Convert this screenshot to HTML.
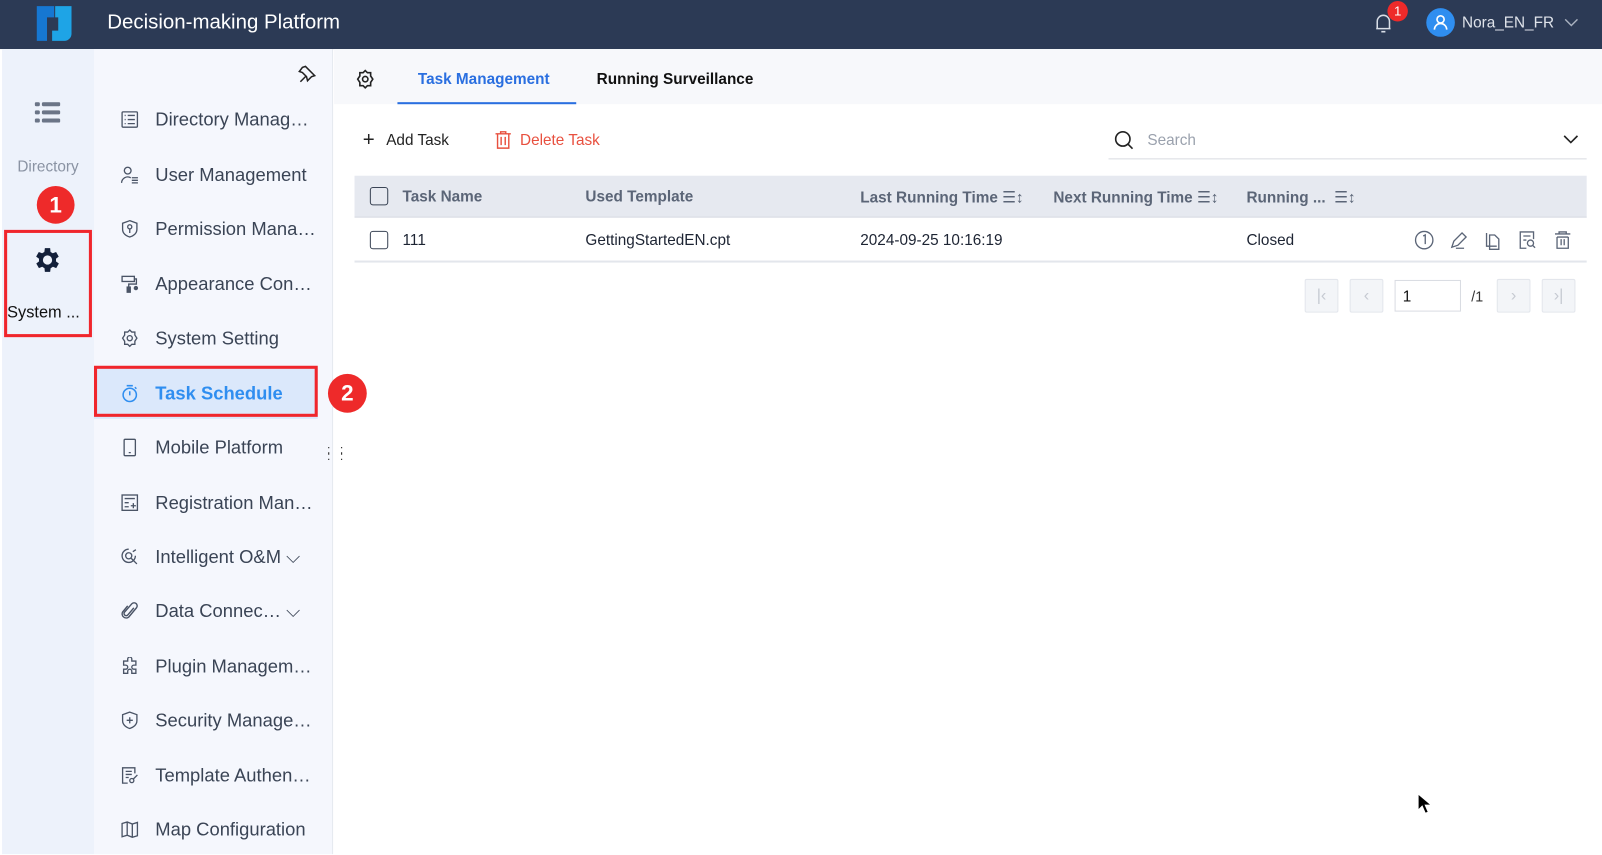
<!DOCTYPE html>
<html><head><meta charset="utf-8"><style>
*{box-sizing:border-box;margin:0;padding:0}
body{width:1602px;height:854px;overflow:hidden;background:#fff;font-family:"Liberation Sans",sans-serif}
#w{width:1568px;height:836px;transform:scale(1.02168);transform-origin:0 0;position:relative}
.a{position:absolute}
.hdr{left:0;top:0;width:1568px;height:48px;background:#2c3a55}
.rail{left:2px;top:48px;width:90px;height:788px;background:#edf2fb}
.sub{left:92px;top:48px;width:234px;height:788px;background:#f5f7fd;border-right:1px solid #e6e9f0}
.it{position:absolute;left:0;width:234px;height:50px;font-size:18px;color:#3a4455;line-height:50px;padding-left:60px;white-space:nowrap}
.it svg{position:absolute;left:26px;top:16px}
.tabs{left:327px;top:48px;width:1241px;height:54px;background:#f7f8fb}
.th{font-size:15px;font-weight:bold;color:#5b6577;top:184px}
.cb{width:18px;height:18px;border:1.5px solid #3a4455;border-radius:3px}
.pg{width:33px;height:33px;border:1px solid #e3e6ec;background:#f3f5f8;top:273px;border-radius:2px;color:#c6cad2;text-align:center;line-height:31px;font-size:16px}
.badge{border-radius:50%;background:#ee2a2a;color:#fff;font-weight:bold;text-align:center}
</style></head><body><div id="w">
<div class="a hdr"></div>
<svg class="a" style="left:34px;top:4px" width="38" height="38" viewBox="0 0 38 38"><path d="M2 2h17v11h-7v23H2z" fill="#1677d2"/><path d="M20 2h16v27a7 7 0 0 1-7 7H17V26h6V13h-3z" fill="#1ea4e6"/></svg>
<div class="a" style="left:105px;top:11px;font-size:20px;color:#fff">Decision-making Platform</div>
<svg class="a" style="left:1344px;top:12px" width="20" height="22" viewBox="0 0 20 22" fill="none" stroke="#d8dde6" stroke-width="1.5"><path d="M4 16V9a6 6 0 0 1 12 0v7H3h14"/><path d="M8 19h4"/></svg>
<div class="a badge" style="left:1358px;top:1px;width:20px;height:20px;font-size:13px;line-height:20px;font-weight:normal">1</div>
<div class="a" style="left:1396px;top:8px;width:28px;height:28px;border-radius:50%;background:#2f8ef0"></div>
<svg class="a" style="left:1400px;top:12px" width="20" height="20" viewBox="0 0 20 20" fill="none" stroke="#fff" stroke-width="1.6"><circle cx="10" cy="7" r="3.5"/><path d="M4 17a6 6 0 0 1 12 0"/></svg>
<div class="a" style="left:1431px;top:14px;font-size:15px;color:#dfe3ea">Nora_EN_FR</div>
<svg class="a" style="left:1530px;top:17px" width="16" height="10" viewBox="0 0 16 10" fill="none" stroke="#aab2c0" stroke-width="1.4"><path d="M2 2l6 6 6-6"/></svg>

<div class="a rail"></div>
<svg class="a" style="left:34px;top:100px" width="25" height="20" viewBox="0 0 25 20" fill="#6b7587"><rect x="0" y="0" width="5" height="4" rx="1.5"/><rect x="7" y="0" width="18" height="4" rx="1.5"/><rect x="0" y="8" width="5" height="4" rx="1.5"/><rect x="7" y="8" width="18" height="4" rx="1.5"/><rect x="0" y="16" width="5" height="4" rx="1.5"/><rect x="7" y="16" width="18" height="4" rx="1.5"/></svg>
<div class="a" style="left:2px;width:90px;top:155px;text-align:center;font-size:15px;color:#8a93a3">Directory</div>
<div class="a badge" style="left:36px;top:182px;width:37px;height:37px;font-size:22px;line-height:37px">1</div>
<div class="a" style="left:4px;top:225px;width:86px;height:105px;border:3px solid #f0262c"></div>
<svg class="a" style="left:31px;top:239px" width="31" height="31" viewBox="0 0 24 24"><path fill="#13203a" d="M19.4 13a7.5 7.5 0 0 0 0-2l2.1-1.6-2-3.5-2.5 1a7 7 0 0 0-1.7-1L15 3h-4l-.4 2.9a7 7 0 0 0-1.7 1l-2.5-1-2 3.5L6.6 11a7.5 7.5 0 0 0 0 2l-2.1 1.6 2 3.5 2.5-1a7 7 0 0 0 1.7 1L11 21h4l.4-2.9a7 7 0 0 0 1.7-1l2.5 1 2-3.5zM13 15.5a3.5 3.5 0 1 1 0-7 3.5 3.5 0 0 1 0 7z" transform="translate(-1 0)"/></svg>
<div class="a" style="left:7px;top:298px;font-size:16px;color:#111">System ...</div>

<div class="a sub">
<svg style="position:absolute;left:199px;top:14px" width="20" height="20" viewBox="0 0 20 20" fill="none" stroke="#222" stroke-width="1.5"><path d="M8 3l9 9-3 1-4 4-1-4-4-4L2 8l3-4zM3 18l5-5"/></svg>
<div class="it" style="top:44px">Directory Manag…<svg width="18" height="18" viewBox="0 0 18 18" fill="none" stroke="#4a5466" stroke-width="1.3"><rect x="1.5" y="1.5" width="15" height="15" rx="1"/><path d="M4 5h1M7 5h7M4 9h1M7 9h7M4 13h1M7 13h7"/></svg></div>
<div class="it" style="top:98px">User Management<svg width="18" height="18" viewBox="0 0 18 18" fill="none" stroke="#4a5466" stroke-width="1.3"><circle cx="7" cy="5" r="3.3"/><path d="M1 17a6 6 0 0 1 9-5M11 12h6M11 14.5h6M11 17h6"/></svg></div>
<div class="it" style="top:151px">Permission Mana…<svg width="18" height="18" viewBox="0 0 18 18" fill="none" stroke="#4a5466" stroke-width="1.3"><path d="M9 1l7 2.5v6c0 4-3.5 6.5-7 7.5-3.5-1-7-3.5-7-7.5v-6z"/><circle cx="9" cy="7" r="2"/><path d="M9 9v4"/></svg></div>
<div class="it" style="top:205px">Appearance Con…<svg width="18" height="18" viewBox="0 0 18 18" fill="none" stroke="#4a5466" stroke-width="1.3"><rect x="1.5" y="1.5" width="12" height="5"/><path d="M13.5 4h2v5H8v3"/><rect x="6.5" y="12" width="3" height="5" fill="#4a5466"/><circle cx="15" cy="13" r="1.5" fill="#4a5466"/></svg></div>
<div class="it" style="top:258px">System Setting<svg width="18" height="18" viewBox="0 0 18 18" fill="none" stroke="#4a5466" stroke-width="1.3"><path d="M9 1l2 2h3v3l2 3-2 3v3h-3l-2 2-2-2H4v-3L2 9l2-3V3h3z"/><circle cx="9" cy="9" r="2.5"/></svg></div>
<div class="it" style="top:312px;width:219px;background:#dbe8fb;color:#2f8ef0;font-weight:bold">Task Schedule<svg width="18" height="18" viewBox="0 0 18 18" fill="none" stroke="#2f8ef0" stroke-width="1.5"><circle cx="9" cy="10.5" r="6.5"/><path d="M9 7v4M6 1.5h6M14 3l1.5 1.5"/></svg></div>
<div class="it" style="top:365px">Mobile Platform<svg width="18" height="18" viewBox="0 0 18 18" fill="none" stroke="#4a5466" stroke-width="1.3"><rect x="3.5" y="1" width="11" height="16" rx="1"/><path d="M8 14h2"/></svg></div>
<div class="it" style="top:419px">Registration Man…<svg width="18" height="18" viewBox="0 0 18 18" fill="none" stroke="#4a5466" stroke-width="1.3"><rect x="1.5" y="1.5" width="15" height="15"/><path d="M4 5h10M4 9h4M4 13h4M10 12h5M12.5 9.5v5"/></svg></div>
<div class="it" style="top:472px">Intelligent O&amp;M ⌵<svg width="18" height="18" viewBox="0 0 18 18" fill="none" stroke="#4a5466" stroke-width="1.3"><path d="M8 1.5a6.5 6.5 0 1 0 6.5 6.5"/><circle cx="8" cy="8" r="3"/><path d="M10.5 10.5l5.5 5.5M12 4l3-2"/></svg></div>
<div class="it" style="top:525px">Data Connec… ⌵<svg width="18" height="18" viewBox="0 0 18 18" fill="none" stroke="#4a5466" stroke-width="1.4"><path d="M13 6l-6 7a2 2 0 0 1-3-3l7-8a3 3 0 0 1 4.5 4L8 15a4 4 0 0 1-6-5l5-6"/></svg></div>
<div class="it" style="top:579px">Plugin Managem…<svg width="18" height="18" viewBox="0 0 18 18" fill="none" stroke="#4a5466" stroke-width="1.3"><path d="M7 2a2 2 0 0 1 4 0v2h4v4h-2a2 2 0 0 0 0 4h2v4h-4v-2a2 2 0 0 0-4 0v2H3v-4h2a2 2 0 0 0 0-4H3V4h4z"/></svg></div>
<div class="it" style="top:632px">Security Manage…<svg width="18" height="18" viewBox="0 0 18 18" fill="none" stroke="#4a5466" stroke-width="1.3"><path d="M9 1l7 2.5v6c0 4-3.5 6.5-7 7.5-3.5-1-7-3.5-7-7.5v-6z"/><path d="M9 6v6M6 9h6"/></svg></div>
<div class="it" style="top:686px">Template Authen…<svg width="18" height="18" viewBox="0 0 18 18" fill="none" stroke="#4a5466" stroke-width="1.3"><path d="M14 7V1.5H2v15h5"/><path d="M5 5h6M5 8h6M5 11h3"/><circle cx="11" cy="14" r="2"/><path d="M12.5 12.5l4-4"/></svg></div>
<div class="it" style="top:739px">Map Configuration<svg width="18" height="18" viewBox="0 0 18 18" fill="none" stroke="#4a5466" stroke-width="1.3"><path d="M1.5 3l5-1.5 5 2 5-1.5v13l-5 1.5-5-2-5 1.5zM6.5 1.5v13M11.5 3.5v13"/></svg></div>
</div>
<div class="a" style="left:92px;top:358px;width:219px;height:50px;border:3px solid #f0262c"></div>
<div class="a badge" style="left:321px;top:366px;width:38px;height:38px;font-size:22px;line-height:38px">2</div>
<div class="a" style="left:320px;top:437px;font-size:12px;line-height:6px;color:#333;letter-spacing:3px">: :<br>: :</div>

<div class="a tabs"></div>
<svg class="a" style="left:348px;top:68px" width="19" height="19" viewBox="0 0 18 18" fill="none" stroke="#222" stroke-width="1.5"><path d="M9 1l2 2h3v3l2 3-2 3v3h-3l-2 2-2-2H4v-3L2 9l2-3V3h3z"/><circle cx="9" cy="9" r="2.5"/></svg>
<div class="a" style="left:409px;top:69px;font-size:15px;font-weight:bold;color:#2a6fe0">Task Management</div>
<div class="a" style="left:389px;top:100px;width:175px;height:2px;background:#2a6fe0"></div>
<div class="a" style="left:584px;top:69px;font-size:15px;font-weight:bold;color:#111">Running Surveillance</div>

<div class="a" style="left:355px;top:126px;font-size:20px;color:#222">+</div>
<div class="a" style="left:378px;top:129px;font-size:15px;color:#222">Add Task</div>
<svg class="a" style="left:484px;top:128px" width="17" height="18" viewBox="0 0 17 18" fill="none" stroke="#e8503f" stroke-width="1.4"><path d="M1 3h15M6 3V1h5v2M3 3v14h11V3M6.5 6v8M10.5 6v8"/></svg>
<div class="a" style="left:509px;top:129px;font-size:15px;color:#e8503f">Delete Task</div>
<div class="a" style="left:1085px;top:155px;width:468px;height:1px;background:#d9dce2"></div>
<svg class="a" style="left:1090px;top:127px" width="20" height="20" viewBox="0 0 20 20" fill="none" stroke="#222" stroke-width="1.6"><circle cx="9" cy="9" r="7"/><path d="M14 14l4.5 4.5"/></svg>
<div class="a" style="left:1123px;top:129px;font-size:15px;color:#9aa1ad">Search</div>
<svg class="a" style="left:1530px;top:132px" width="15" height="9" viewBox="0 0 15 9" fill="none" stroke="#222" stroke-width="1.6"><path d="M1 1l6.5 6.5L14 1"/></svg>

<div class="a" style="left:347px;top:172px;width:1206px;height:41px;background:#e6e9f0;border-bottom:1px solid #d6dae2"></div>
<div class="a cb" style="left:362px;top:183px"></div>
<div class="a th" style="left:394px">Task Name</div>
<div class="a th" style="left:573px">Used Template</div>
<div class="a th" style="left:842px">Last Running Time <span style="font-weight:normal">☰↕</span></div>
<div class="a th" style="left:1031px">Next Running Time <span style="font-weight:normal">☰↕</span></div>
<div class="a th" style="left:1220px">Running ... &nbsp;<span style="font-weight:normal">☰↕</span></div>
<div class="a" style="left:347px;top:255px;width:1206px;height:2px;background:#e3e6ec"></div>
<div class="a cb" style="left:362px;top:226px"></div>
<div class="a" style="left:394px;top:227px;font-size:15px;color:#1d2433">111</div>
<div class="a" style="left:573px;top:227px;font-size:15px;color:#1d2433">GettingStartedEN.cpt</div>
<div class="a" style="left:842px;top:227px;font-size:15px;color:#1d2433">2024-09-25 10:16:19</div>
<div class="a" style="left:1220px;top:227px;font-size:15px;color:#1d2433">Closed</div>
<svg class="a" style="left:1384px;top:225px" width="160" height="20" viewBox="0 0 160 20" fill="none" stroke="#5b6577" stroke-width="1.3">
<circle cx="10" cy="10" r="8.5"/><path d="M9 6l2-1v9"/>
<path d="M37 17l2-6 8-8 4 4-8 8zM41 18h8"/>
<path d="M71 3v13h10M74 5h5l4 4v10h-9z"/>
<path d="M117 9V2h-13v16h6M107 6h7M107 10h3"/><circle cx="114" cy="13" r="3"/><path d="M116 15l2.5 2.5"/>
<path d="M138 4h15M142 4V2h7v2M140 7v11h11V7M144 9v6M147 9v6M140 7h11"/></svg>

<div class="a pg" style="left:1277px">|‹</div>
<div class="a pg" style="left:1321px">‹</div>
<div class="a" style="left:1365px;top:274px;width:65px;height:31px;border:1px solid #d9dce2;font-size:15px;line-height:31px;padding-left:7px;color:#111">1</div>
<div class="a" style="left:1440px;top:282px;font-size:14px;color:#333">/1</div>
<div class="a pg" style="left:1465px">›</div>
<div class="a pg" style="left:1509px">›|</div>
<svg class="a" style="left:1387px;top:776px" width="16" height="22" viewBox="0 0 16 22"><path d="M1 1v16l4-4 3 7 3-1-3-7h6z" fill="#000" stroke="#fff" stroke-width="1"/></svg>
</div></body></html>
